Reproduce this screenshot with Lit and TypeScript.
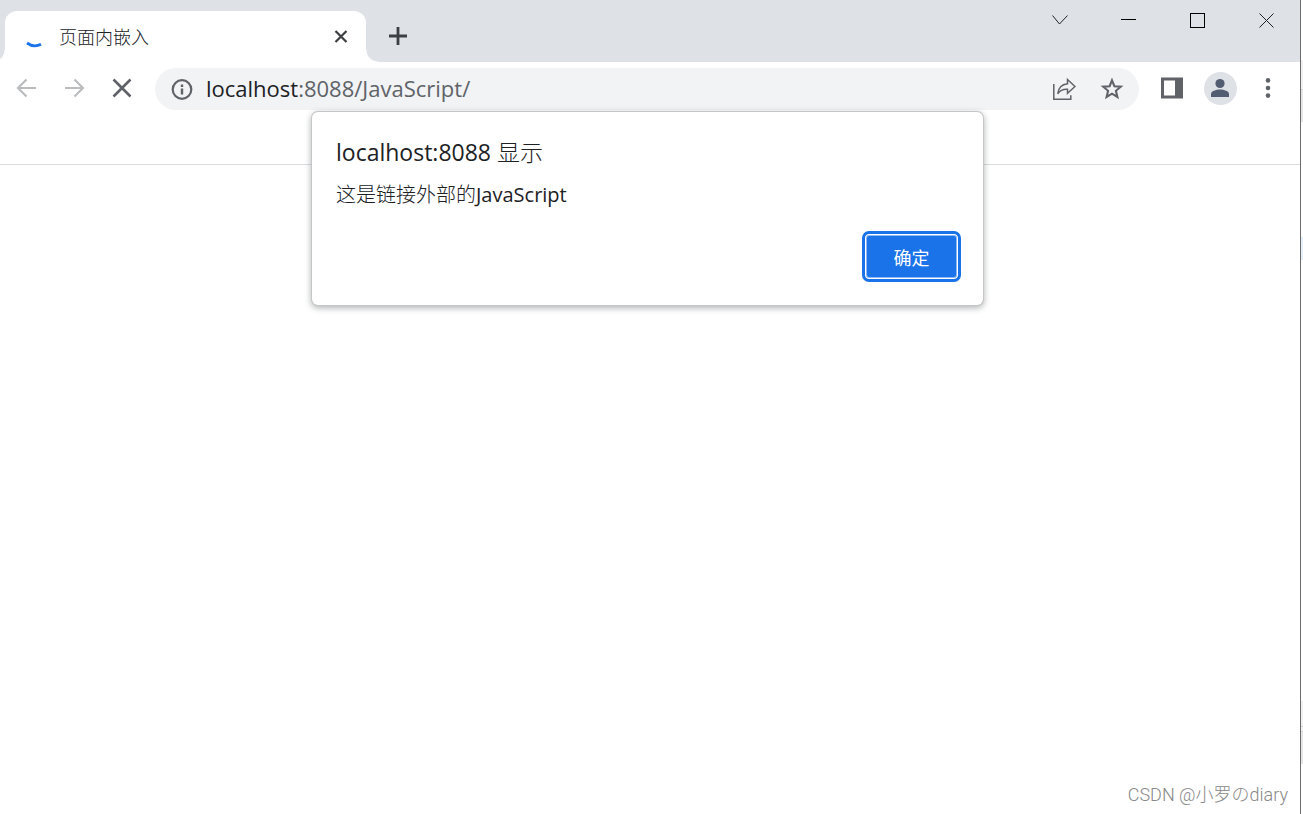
import { LitElement, html, css, svg } from "lit";
import { customElement, property, state } from "lit/decorators.js";

const glyphs = {
  back: svg`<path d="M10.5 1.500 2 10l8.500 8.500M2 10H20" stroke="#babcbe" stroke-width="2.200" fill="none"/>`,
  forward: svg`<path d="M10.5 1.500 19 10l-8.500 8.500M19 10H1" stroke="#babcbe" stroke-width="2.200" fill="none"/>`,
  stop: svg`<path d="M1.500 1.500l17 17M18.500 1.500l-17 17" stroke="#5f6368" stroke-width="2.600" fill="none"/>`,
};

// Chinese runs are set in a lighter weight than the Latin text beside them.
const withLightHan = (text: string) =>
  text
    .split(/(\p{Script=Han}+)/u)
    .filter(Boolean)
    .map((run) => (/\p{Script=Han}/u.test(run) ? html`<span class="han">${run}</span>` : run));

@customElement("browser-tab-strip")
class BrowserTabStrip extends LitElement {
  @property() heading = "";

  static styles = css`
    :host {
      display: flex;
      align-items: flex-start;
      height: 62px;
      background: #dee1e6;
    }
    button {
      border: 0;
      padding: 0;
      background: none;
      display: grid;
      place-items: center;
    }
    svg {
      display: block;
    }
    .flare {
      align-self: flex-end;
      width: 12px;
      height: 12px;
      background: radial-gradient(circle at 100% 0, transparent 11px, #fff 12px);
    }
    .flare.start {
      width: 5px;
      background: radial-gradient(circle at -7px 0, transparent 11px, #fff 12px);
    }
    .tab {
      box-sizing: border-box;
      width: 361px;
      height: 51px;
      margin-top: 11px;
      padding: 0 14px 0 20px;
      display: flex;
      align-items: center;
      background: #fff;
      border-radius: 12px 12px 0 0;
    }
    .title {
      flex: 1;
      margin-left: 16px;
      font-size: 18px;
      line-height: 24px;
      font-weight: 300;
      color: #202124;
    }
    .close {
      width: 22px;
      height: 24px;
    }
    .add {
      width: 32px;
      height: 32px;
      margin: 20px 0 0 4px;
    }
    .window {
      margin-left: auto;
      display: flex;
    }
    .window button {
      width: 69px;
      height: 40px;
    }
    .window button:last-child {
      width: 68px;
    }
  `;

  render() {
    return html`
      <span class="flare start"></span>
      <div class="tab">
        <svg width="18" height="24" viewBox="0 0 18 24">
          <path d="M2 18q7 5 14 1.200" stroke="#1a73e8" stroke-width="2.800" fill="none" />
        </svg>
        <span class="title">${this.heading}</span>
        <button class="close" aria-label="关闭标签页">
          <svg width="14" height="14" viewBox="0 0 14 14">
            <path d="M1.500 1l11 11M12.500 1l-11 11" stroke="#3c4043" stroke-width="2.200" />
          </svg>
        </button>
      </div>
      <span class="flare end"></span>
      <button class="add" aria-label="新标签页">
        <svg width="18" height="18" viewBox="0 0 18 18">
          <path d="M9 0v18M0 9h18" stroke="#3c4043" stroke-width="2.800" />
        </svg>
      </button>
      <div class="window">
        <button aria-label="搜索标签页">
          <svg width="16" height="10" viewBox="0 0 16 10"><path d="M.5.5 7.500 9 15.500.5" stroke="#222" fill="none" /></svg>
        </button>
        <button aria-label="最小化">
          <svg width="15" height="2" viewBox="0 0 15 2" shape-rendering="crispEdges"><path d="M0 .5h15" stroke="#000" /></svg>
        </button>
        <button aria-label="最大化">
          <svg width="15" height="15" viewBox="0 0 15 15" shape-rendering="crispEdges">
            <path d="M.5.5h14v14H.5z" stroke="#000" fill="none" />
          </svg>
        </button>
        <button aria-label="关闭">
          <svg width="15" height="15" viewBox="0 0 15 15"><path d="M.5.5l14 14M14.500.5l-14 14" stroke="#222" /></svg>
        </button>
      </div>
    `;
  }
}

@customElement("browser-toolbar")
class BrowserToolbar extends LitElement {
  @property() host = "";
  @property() path = "";

  static styles = css`
    :host {
      display: flex;
      align-items: center;
      padding: 6px 8px 0 2px;
      height: 42px;
    }
    button {
      border: 0;
      padding: 0;
      background: none;
      display: grid;
      place-items: center;
      width: 48px;
      height: 42px;
    }
    svg {
      display: block;
    }
    .address {
      flex: 1;
      display: flex;
      align-items: center;
      height: 42px;
      margin: 0 9px;
      padding: 0 3px 0 16px;
      border-radius: 21px;
      background: #f1f3f4;
    }
    .address .info {
      width: 22px;
    }
    .url {
      flex: 1;
      margin-left: 13px;
      padding-bottom: 2px;
      font-size: 22px;
      line-height: 32px;
      color: #5f6368;
    }
    .host {
      color: #202124;
    }
    .avatar {
      width: 33px;
      height: 33px;
      border-radius: 50%;
      background: #dee1e6;
      display: grid;
      place-items: center;
    }
    .chrome {
      padding-bottom: 2px;
    }
  `;

  render() {
    return html`
      <button class="chrome" aria-label="后退"><svg width="20" height="20" viewBox="0 0 20 20">${glyphs.back}</svg></button>
      <button class="chrome" aria-label="前进"><svg width="20" height="20" viewBox="0 0 20 20">${glyphs.forward}</svg></button>
      <button class="chrome" aria-label="停止"><svg width="20" height="20" viewBox="0 0 20 20">${glyphs.stop}</svg></button>
      <div class="address">
        <button class="info" aria-label="网站信息">
          <svg width="22" height="22" viewBox="0 0 22 22">
            <circle cx="11" cy="11.500" r="9.300" stroke="#5f6368" stroke-width="2.200" fill="none" />
            <path d="M11 10.500v6M11 6.500v2.400" stroke="#5f6368" stroke-width="2.400" />
          </svg>
        </button>
        <span class="url"><span class="host">${this.host}</span>${this.path}</span>
        <button aria-label="分享">
          <svg width="24" height="24" viewBox="0 0 24 24" fill="none" stroke="#5f6368" stroke-width="1.500">
            <path d="M1.800 7v15.200h17v-4" />
            <path d="M15.500 2.500l7.500 7-7.500 6.800v-4c-4.500-.3-7.500 1.200-9.800 4.500.6-5.500 3.800-9.300 9.800-10z" />
          </svg>
        </button>
        <button aria-label="添加书签">
          <svg width="24" height="24" viewBox="0 0 24 24" fill="none" stroke="#5f6368" stroke-width="2.100">
            <path d="M12 3.300l2.400 5.900 6.400.5-4.900 4.100 1.500 6.200-5.400-3.300-5.400 3.300 1.500-6.200-4.900-4.100 6.400-.5z" />
          </svg>
        </button>
      </div>
      <button class="chrome" aria-label="侧边栏">
        <svg width="22" height="22" viewBox="0 0 22 22">
          <path fill-rule="evenodd" fill="#5f6368" d="M0 .5h22v21H0zM3 3.500v15h11v-15z" />
        </svg>
      </button>
      <button class="chrome" aria-label="用户">
        <span class="avatar">
          <svg width="20" height="20" viewBox="0 0 20 20" fill="#525d72">
            <circle cx="10" cy="5.500" r="4.600" />
            <path d="M1 19v-3c0-3 5-4.500 9-4.500s9 1.500 9 4.500v3z" />
          </svg>
        </span>
      </button>
      <button class="chrome" aria-label="菜单">
        <svg width="6" height="20" viewBox="0 0 6 20" fill="#5f6368">
          <circle cx="3" cy="2.400" r="2.300" />
          <circle cx="3" cy="10" r="2.300" />
          <circle cx="3" cy="17.600" r="2.300" />
        </svg>
      </button>
    `;
  }
}

@customElement("alert-dialog")
class AlertDialog extends LitElement {
  @property() heading = "";
  @property() message = "";

  static styles = css`
    :host {
      display: block;
    }
    .box {
      box-sizing: border-box;
      display: flex;
      flex-direction: column;
      padding: 23px 22px 23px 24px;
      border-radius: 6px;
      background: #fff;
      box-shadow: 0 0 0 1px #c4c6c8, 0 2px 6px 1px rgba(60, 64, 67, 0.4);
      color: #202124;
    }
    h1 {
      margin: 0;
      font-size: 23px;
      line-height: 34px;
      font-weight: 400;
    }
    p {
      margin: 11px 0 21px;
      font-size: 20px;
      line-height: 30px;
    }
    .han {
      font-weight: 300;
    }
    button {
      align-self: flex-end;
      width: 99px;
      height: 51px;
      padding: 2px 0 0;
      border: 3px solid #1a73e8;
      border-radius: 7px;
      box-shadow: inset 0 0 0 1px #fff, inset 0 0 0 2px #8db9f4;
      background: #1a73e8;
      color: #fff;
      font-family: inherit;
      font-size: 18px;
      line-height: 24px;
    }
  `;

  render() {
    return html`
      <div class="box" role="alertdialog" aria-labelledby="heading" aria-describedby="message">
        <h1 id="heading">${withLightHan(this.heading)}</h1>
        <p id="message">${withLightHan(this.message)}</p>
        <button @click=${() => this.dispatchEvent(new CustomEvent("accept"))}>确定</button>
      </div>
    `;
  }
}

@customElement("app-root")
class AppRoot extends LitElement {
  @state() private open = true;

  static styles = css`
    :host {
      display: flex;
      height: 100vh;
      overflow: hidden;
      background: #fff;
      font-family: "Open Sans", "Noto Sans CJK SC", sans-serif;
    }
    .browser {
      position: relative;
      flex: 1;
      display: flex;
      flex-direction: column;
      border-right: 1px solid #6b6b6b;
    }
    .behind {
      width: 2px;
      display: flex;
      flex-direction: column;
      background: #fff;
    }
    .upper {
      height: 62px;
      margin-top: 60px;
      background: linear-gradient(#f2f2f2 29px, #d5d5d5 29px 30px, #e6e6e6 30px);
    }
    .selected {
      height: 23px;
      margin-top: 115px;
      background: #e5f0ff;
    }
    .lower {
      height: 63px;
      margin: auto 0 50px;
      background: linear-gradient(#f2f2f2 25px, #d5d5d5 25px 26px, #f2f2f2 26px 30px, #d5d5d5 30px 31px, #e6e6e6 31px);
    }
    .bookmarks {
      height: 54px;
      border-bottom: 1px solid #dadce0;
    }
    .page {
      flex: 1;
      display: flex;
      justify-content: flex-end;
      align-items: flex-end;
    }
    .mark {
      padding: 0 12px 7px 0;
      font-family: Roboto, "Noto Sans CJK SC", sans-serif;
      font-size: 18px;
      line-height: 24px;
      font-weight: 300;
      color: #888;
    }
    alert-dialog {
      position: absolute;
      top: 112px;
      left: calc(50% - 338px);
      width: 671px;
    }
  `;

  render() {
    return html`
      <div class="browser">
        <browser-tab-strip heading="页面内嵌入"></browser-tab-strip>
        <browser-toolbar host="localhost" path=":8088/JavaScript/"></browser-toolbar>
        <div class="bookmarks"></div>
        <main class="page"><span class="mark">CSDN @小罗のdiary</span></main>
        ${this.open
          ? html`<alert-dialog
              heading="localhost:8088 显示"
              message="这是链接外部的JavaScript"
              @accept=${() => (this.open = false)}
            ></alert-dialog>`
          : null}
      </div>
      <div class="behind">
        <span class="upper"></span><span class="selected"></span><span class="lower"></span>
      </div>
    `;
  }
}
